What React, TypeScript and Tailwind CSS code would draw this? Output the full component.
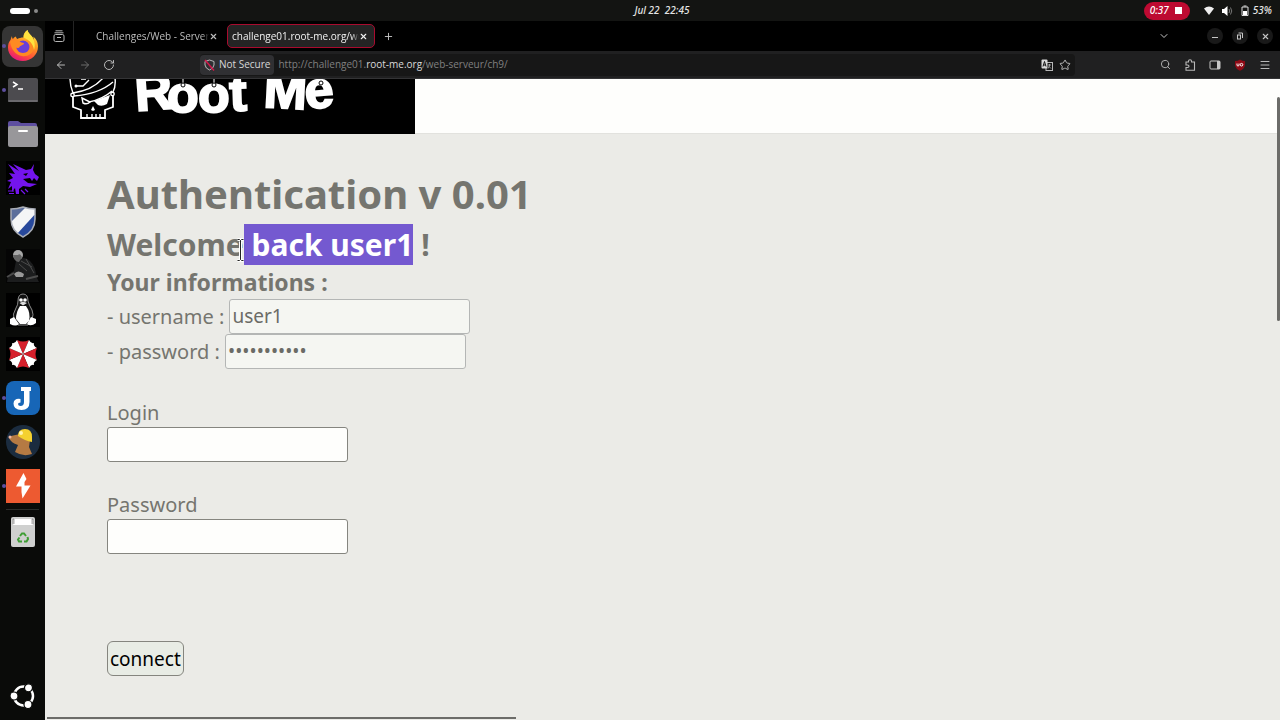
import type { ReactNode } from "react";
import { ArrowLeft, ArrowRight, ChevronDown, Menu, Plus, RotateCw, Search, Star, X } from "lucide-react";

const dockApps: { name: string; running?: boolean; active?: boolean; icon: ReactNode }[] = [
  { name: "Firefox", running: true, active: true, icon: <FirefoxIcon /> },
  { name: "Terminal", running: true, icon: <TerminalIcon /> },
  { name: "Files", icon: <FilesIcon /> },
  { name: "Dragon", icon: <DragonIcon /> },
  { name: "Shield", icon: <ShieldIcon /> },
  { name: "Hashcat", icon: <HoodedIcon /> },
  { name: "Linux", icon: <TuxIcon /> },
  { name: "Umbrella", icon: <UmbrellaIcon /> },
  { name: "Joplin", running: true, icon: <JoplinIcon /> },
  { name: "Mole", icon: <MoleIcon /> },
  { name: "Burp Suite", running: true, icon: <BurpIcon /> },
];

function FirefoxIcon() {
  return (
    <svg viewBox="0 0 32 32" className="w-8 h-8">
      <defs>
        <linearGradient id="fx" x1="0.8" y1="0" x2="0.3" y2="1">
          <stop offset="0" stopColor="#fff04a" />
          <stop offset="0.4" stopColor="#ff9a1f" />
          <stop offset="0.75" stopColor="#ff4a3c" />
          <stop offset="1" stopColor="#e3167f" />
        </linearGradient>
      </defs>
      <path d="M5 6C4 8 3.500 10 3.500 10C1.500 12 1 15 1 17.500C1 25.500 7.500 31 15.800 31C24.500 31 31 24.500 31 16.500C31 11.500 28.500 8 26 6.500C26.800 8 27 9 27 10C25.500 5 21 4 20.500 0C17.500 1.500 16 5 16.500 7.500C14 7.500 12 8 10.500 9C9.500 8.500 9 7.500 9 6.500C7.500 7 6.500 8 6 9C5.200 8.500 5 7 5 6Z" fill="url(#fx)" />
      <circle cx="16" cy="17" r="6.500" fill="#6a3fd8" />
      <path d="M3 11C7 9 12 10 13.500 12C14.500 13 17 12.800 17 13.500C17 15 13 15.500 12.500 17C12 18.500 9.500 18 9 17.500C9.500 20 12 23 16 23C20 23 23 20 23 17C23 13 21 11.500 18 10C24 10 27 14 27 18C26 24 20 27 15 26C9 25 4 20 3 11Z" fill="#ff8a22" />
      <path d="M16.500 7.500C17 3.500 19 1.500 20.500 0C21 4 25.500 5 27 11C28 14 28 17 27 20C26 13 22 10 16.500 7.500Z" fill="#ffe33f" />
    </svg>
  );
}

function TerminalIcon() {
  return (
    <svg viewBox="0 0 30 24" className="w-[30px] h-6">
      <rect x="0" y="0" width="30" height="24" rx="2" fill="#4c4b4f" />
      <rect x="0" y="22" width="30" height="2" rx="1" fill="#6b6a6e" />
      <path d="M5 4L9 6.500L5 9M10 11H15" fill="none" stroke="#fff" strokeWidth="1.500" />
    </svg>
  );
}

function FilesIcon() {
  return (
    <svg viewBox="0 0 30 28" className="w-[30px] h-7">
      <path d="M0 3Q0 1 2 1H10L13 3H27Q29 3 29 5V14H0Z" fill="#5e4fa0" />
      <rect x="0" y="6" width="30" height="21" rx="2" fill="#98979a" />
      <rect x="10" y="10" width="10" height="2" rx="1" fill="#fff" />
    </svg>
  );
}

function DragonIcon() {
  return (
    <svg viewBox="0 0 34 34" className="w-[34px] h-[34px]">
      <rect width="34" height="34" fill="#000" />
      <path d="M2 3L13 10L7 3L20 9L25 8L28 3L27 9L29 13L33 16L31 20L28 17L26 20L24 17L17 18L22 22L31 23L24 26L17 25L13 28V33H10L9 27L6 31L6 25L2 28L5 21L1 20L7 17L3 12L9 13Z" fill="#7414ee" />
      <path d="M17 13L22 12L20 15Z" fill="#000" />
      <path d="M2 30H8M3 32.500H8M15 29L19 33M19 28L22 31" stroke="#7414ee" strokeWidth="1.200" />
    </svg>
  );
}

function ShieldIcon() {
  return (
    <svg viewBox="0 0 28 32" className="w-7 h-8">
      <clipPath id="shield"><path d="M2 3Q8 3 14 1Q20 3 26 3V13Q26 25 14 31Q2 25 2 13Z" /></clipPath>
      <g clipPath="url(#shield)">
        <rect width="28" height="32" fill="#27489b" />
        <path d="M0 0H20L2 18H0Z" fill="#5c6f9c" />
        <path d="M-2 20L20 -2L30 4L8 28Z" fill="#f4f5f6" />
      </g>
      <path d="M2 3Q8 3 14 1Q20 3 26 3V13Q26 25 14 31Q2 25 2 13Z" fill="none" stroke="#a9adb6" strokeWidth="1.500" />
    </svg>
  );
}

function HoodedIcon() {
  return (
    <svg viewBox="0 0 34 34" className="w-[34px] h-[34px]">
      <rect width="34" height="34" fill="#050505" />
      <path d="M1 33Q2 24 8 22L10 12Q18 6 24 12Q30 18 30 27L33 33Z" fill="#1c1d1e" />
      <ellipse cx="12" cy="6" rx="5" ry="5" fill="#a7a7a7" />
      <path d="M7 6Q8 13 13 13L16 8Q14 4 12 6Z" fill="#626262" />
      <path d="M15 12L26 18M20 10L28 24M13 15L21 22" stroke="#4b4b4b" strokeWidth="1" />
      <path d="M8 25Q12 20 18 25L17 28H10Z" fill="#999" />
      <path d="M1 28L8 24M20 30L32 27" stroke="#4c4c4c" strokeWidth="2" />
    </svg>
  );
}

function TuxIcon() {
  return (
    <svg viewBox="0 0 34 34" className="w-[34px] h-[34px]">
      <rect width="34" height="34" fill="#000" />
      <path d="M12 8Q12 1 17 1Q22 1 22 8Q23 12 26 17Q28 21 26 27L22 32H12L8 27Q6 21 10 15Q12 12 12 8Z" fill="#111" stroke="#aaa" strokeWidth="0.800" />
      <path d="M14 13L20 13Q25 20 23 28L20 31H14L10 26Q10 19 14 13Z" fill="#fff" />
      <circle cx="15" cy="7" r="1.800" fill="#fff" />
      <circle cx="19" cy="7" r="1.800" fill="#fff" />
      <path d="M13.500 10L17 8.500L21 10L17 12.500Z" fill="#ddd" />
      <path d="M4 26L8 24L13 31Q10 34 4 31ZM30 26L25 24L21 31Q25 34 30 30Z" fill="#fff" />
    </svg>
  );
}

function UmbrellaIcon() {
  return (
    <svg viewBox="0 0 34 34" className="w-[34px] h-[34px]">
      <rect width="34" height="34" fill="#000" />
      <g transform="translate(17 17)">
        {[0, 90, 180, 270].map((a) => (
          <g key={a} transform={`rotate(${a})`}>
            <path d="M0 0L-6 -14Q0 -11 6 -14Z" fill="#d61f2b" />
            <path d="M0 0L6 -14Q8 -10 11 -11Q10 -8 14 -6Z" fill="#fff" />
          </g>
        ))}
      </g>
    </svg>
  );
}

function JoplinIcon() {
  return (
    <svg viewBox="0 0 34 34" className="w-[34px] h-[34px]">
      <rect width="34" height="34" rx="8" fill="#1766b7" />
      <path d="M15 6H25V10H23.500V21Q23.500 29 15.500 29Q7.500 29 7.500 22.500Q8 17 14.500 18V21.500Q12 21.500 12 23Q12 25 14.500 25Q18 25 18 21V10H15Z" fill="#fff" />
    </svg>
  );
}

function MoleIcon() {
  return (
    <svg viewBox="0 0 34 34" className="w-[34px] h-[34px]">
      <circle cx="17" cy="17" r="17" fill="#1b2c3f" />
      <path d="M3 13Q2 11 5 11L14 9L24 15L23 22L26 29Q17 32 9 27L12 20Q5 18 3 13Z" fill="#b57a43" />
      <path d="M12 11Q12 4 19 4Q26 4 26 12V17Q19 16 12 11Z" fill="#f5d12f" />
      <circle cx="15" cy="8" r="2" fill="#fff4b0" />
      <circle cx="4" cy="12" r="1.500" fill="#f0b7a5" />
    </svg>
  );
}

function BurpIcon() {
  return (
    <svg viewBox="0 0 34 34" className="w-[34px] h-[34px]">
      <rect width="34" height="34" fill="#ed5a31" />
      <path d="M17.500 4L10 17.500H15.500V23L16.500 29.500L24.500 16.500H18.500V13L20.500 10Z" fill="#fff" />
    </svg>
  );
}

function TrashIcon() {
  return (
    <svg viewBox="0 0 24 30" className="w-6 h-[30px]">
      <rect x="0" y="0" width="24" height="30" rx="2" fill="#cfd0cf" />
      <rect x="2" y="2" width="20" height="6" rx="1" fill="#fff" />
      <path d="M2 7V2H3V7M21 7V2H22V7" stroke="#777" strokeWidth="0.600" fill="none" />
      <g fill="none" stroke="#3f9e35" strokeWidth="2">
        <path d="M9 19L11 16.500H13L15 19" />
        <path d="M16.500 20L17 22L15.500 24.500H13" />
        <path d="M11 24.500H8L7 22.500L8.500 20.500" />
      </g>
    </svg>
  );
}

function UbuntuIcon() {
  return (
    <svg viewBox="0 0 26 26" className="w-[26px] h-[26px]">
      <circle cx="13.500" cy="13" r="9.500" fill="none" stroke="#fff" strokeWidth="2.500" />
      <g fill="#fff" stroke="#0a0b09" strokeWidth="1.200">
        <circle cx="4" cy="13" r="4" />
        <circle cx="18.500" cy="4.800" r="4" />
        <circle cx="18" cy="21.500" r="4" />
      </g>
    </svg>
  );
}

function RootMeLogo() {
  return (
    <svg viewBox="0 0 370 55" className="w-[370px] h-[55px] bg-black" role="img" aria-label="Root Me">
      <g fill="none" stroke="#fff" strokeWidth="1.400">
        <path d="M25 -1Q25 7 28 14Q48 11 58 -1M29 17Q54 15 68 3" />
        <path d="M70 -1Q71 7 68 13M44 23Q58 20 67 12" />
        <path d="M32 7H38L44 1M36 0H41" />
        <path d="M28 18V28L36 31V39H60V31L68 28V17" strokeWidth="1.800" />
        <path d="M42 39V35M47 39V35M51 39V35M55 39V35" />
        <circle cx="27.500" cy="16" r="1.700" />
        <circle cx="67.500" cy="15" r="1.700" />
        <path d="M37 19L45 23Q42 26 38 24Z" />
      </g>
      <path d="M49 22L65 16L62 25Q57 28 53 26ZM46 31L48 27L50 31L48 32Z" fill="#fff" />
      <circle cx="31" cy="7" r="1.500" fill="#fff" />
      <text
        x="91 122 153 185 202 218 261"
        y="32 33 33 32 32 28 30"
        rotate="-4 0 0 -2 0 3 -5"
        fill="#fff"
        stroke="#fff"
        strokeWidth="2"
        className="font-['Liberation_Sans',sans-serif] font-bold text-[52px]"
      >
        Root Me
      </text>
      <path d="M138 0V5M169 0V5M276 0V4" stroke="#fff" />
      <g fill="#fff" stroke="#000" strokeWidth="1">
        <circle cx="138" cy="6" r="2" />
        <circle cx="169" cy="6" r="2" />
        <circle cx="276" cy="4" r="2" />
      </g>
    </svg>
  );
}

function TopBar() {
  return (
    <header className="h-[21px] grid grid-cols-3 items-center bg-[#131412] text-[#e4e4e4] text-[10px] font-medium italic px-2">
      <div className="flex items-center gap-1 pl-0.5">
        <span className="w-5 h-1.5 rounded-full bg-white" />
        <span className="w-1 h-1 rounded-full bg-[#8a8a8a]" />
      </div>
      <time className="text-center whitespace-pre pl-11">Jul 22  22:45</time>
      <div className="flex items-center justify-end">
        <button className="flex items-center gap-1.5 h-[18px] px-1.5 rounded-full bg-[#bd0a31] text-white italic mr-3.5">
          0:37
          <span className="w-[7px] h-[7px] mr-0.5 bg-white" />
        </button>
        <svg viewBox="0 0 10 9" className="w-[10px] h-[9px] mr-2">
          <path d="M0 2.500Q5 -1.500 10 2.500L5 9Z" fill="#eee" />
        </svg>
        <svg viewBox="0 0 11 10" className="w-[11px] h-[10px] mr-2">
          <path d="M0 3H2L5.500 0V10L2 7H0Z" fill="#fff" />
          <path d="M7 3Q8.500 5 7 7M8.500 1.500Q11 5 8.500 8.500" fill="none" stroke="#777" />
        </svg>
        <svg viewBox="0 0 8 11" className="w-2 h-[11px] mr-1">
          <path d="M2.500 1H5.500M1 2H7V10.500H1Z" fill="none" stroke="#ddd" />
          <rect x="2" y="6" width="4" height="4" fill="#fff" />
        </svg>
        <span>53%</span>
      </div>
    </header>
  );
}

function Dock() {
  return (
    <nav className="w-[45px] shrink-0 flex flex-col bg-[#0a0b09] pt-[3px] pb-0.5">
      {dockApps.map((app) => (
        <button key={app.name} aria-label={app.name} className="relative w-full h-11 flex items-center justify-center">
          {app.running && <span className="absolute left-[2px] w-1 h-1 rounded-full bg-[#5d4f9e]" />}
          <span className={app.active ? "w-[41px] h-[41px] flex items-center justify-center rounded-lg bg-[#353535]" : "flex"}>
            {app.icon}
          </span>
        </button>
      ))}
      <div className="h-px mx-1.5 mt-px bg-[#2c2d2c]" />
      <button aria-label="Trash" className="w-full h-11 flex items-center justify-center"><TrashIcon /></button>
      <button aria-label="Show apps" className="w-full h-11 mt-auto flex items-center justify-center"><UbuntuIcon /></button>
    </nav>
  );
}

function Tab({ title, active }: { title: string; active?: boolean }) {
  return (
    <div
      className={
        active
          ? "w-[148px] h-6 flex items-center pl-1 pr-1.5 rounded-[5px] border border-[#a90b2e] bg-[#242424] text-[#f2f2f2]"
          : "w-[148px] h-6 flex items-center pl-[19px] pr-[7px] text-[#bdbdbd]"
      }
    >
      <span className="flex-1 overflow-hidden whitespace-nowrap [mask-image:linear-gradient(to_right,black_94%,transparent)]">{title}</span>
      <button aria-label="Close tab"><X size={9} strokeWidth={3} /></button>
    </div>
  );
}

function TabStrip() {
  return (
    <div className="h-[30px] flex items-center bg-black font-['Open_Sans',sans-serif] text-[10px] text-[#c6c6c6]">
      <button aria-label="Firefox View" className="w-[29px] h-full flex items-center justify-center border-r border-[#242424]">
        <svg viewBox="0 0 12 12" className="w-3 h-3" fill="none" stroke="#b5b5b5">
          <path d="M2.500 0.800H9.500M1.500 2.800H10.500" />
          <rect x="1" y="4.500" width="10" height="7" rx="1.500" />
          <path d="M4 7.500H8" />
        </svg>
      </button>
      <div className="flex gap-0.5 ml-[3px]">
        <Tab title="Challenges/Web - Server :" />
        <Tab title="challenge01.root-me.org/we" active />
      </div>
      <button aria-label="New tab" className="ml-2"><Plus size={11} /></button>
      <div className="ml-auto flex items-center pr-[7px]">
        <button aria-label="List tabs" className="mr-[37px]"><ChevronDown size={12} /></button>
        <div className="flex gap-[9px]">
          <button aria-label="Minimize" className="w-4 h-4 rounded-full bg-[#191919] flex items-end justify-center">
            <span className="w-1.5 h-px bg-[#c6c6c6] mb-1.5" />
          </button>
          <button aria-label="Restore" className="w-4 h-4 rounded-full bg-[#191919] flex items-center justify-center">
            <svg viewBox="0 0 8 8" className="w-2 h-2" fill="none" stroke="#c6c6c6">
              <path d="M2.500 1H6.500V6" />
              <rect x="1.500" y="3" width="3" height="4" />
            </svg>
          </button>
          <button aria-label="Close" className="w-4 h-4 rounded-full bg-[#191919] flex items-center justify-center"><X size={9} strokeWidth={3} /></button>
        </div>
      </div>
    </div>
  );
}

function Toolbar() {
  return (
    <div className="h-7 flex items-center bg-[#202021] border-b border-[#343436] font-['Open_Sans',sans-serif] text-[10px] text-[#b8b8b8] pl-2.5 pr-[9px]">
      <div className="flex gap-3">
        <button aria-label="Back"><ArrowLeft size={12} /></button>
        <button aria-label="Forward" className="text-[#6c6c6c]"><ArrowRight size={12} /></button>
        <button aria-label="Reload"><RotateCw size={12} /></button>
      </div>
      <div className="flex-1 h-[22px] mx-[85px] flex items-center rounded bg-[#171717] pr-1">
        <button className="h-5 flex items-center gap-1 px-1 rounded bg-[#303033] text-[#d8d8d8] mr-1">
          <svg viewBox="0 0 11 12" className="w-[11px] h-3" fill="none">
            <path d="M5.500 1L10 2.500V6Q9.500 9.500 5.500 11Q1.500 9.500 1 6V2.500Z" stroke="#b8b8b8" />
            <path d="M1 1L10 11.500" stroke="#d3164a" strokeWidth="1.500" />
          </svg>
          <span>Not Secure</span>
        </button>
        <span className="flex-1 text-[#808080]">
          http://challenge01.<span className="text-[#dadada]">root-me.org</span>/web-serveur/ch9/
        </span>
        <button aria-label="Translate page" className="mr-1.5">
          <svg viewBox="0 0 12 12" className="w-3 h-3">
            <rect x="5" y="3.500" width="6.500" height="8" fill="none" stroke="#b8b8b8" />
            <path d="M7 6H10M8.500 5V7L7 9.500M8 7.500L10 9.500" stroke="#b8b8b8" strokeWidth="0.800" fill="none" />
            <rect x="0.500" y="0.500" width="6" height="9" rx="1" fill="#d8d8d8" />
            <path d="M2 7.500L3.500 2.500L5 7.500M2.500 6H4.500" stroke="#171717" fill="none" />
          </svg>
        </button>
        <button aria-label="Bookmark"><Star size={12} /></button>
      </div>
      <div className="flex items-center gap-[13px]">
        <button aria-label="Search"><Search size={11} /></button>
        <button aria-label="Extensions">
          <svg viewBox="0 0 12 12" className="w-3 h-3" fill="none" stroke="#b8b8b8" strokeWidth="1.100">
            <path d="M4.500 3V2Q4.500 0.700 6 0.700Q7.500 0.700 7.500 2V3H10.500V11.300H2V8.500H3.500Q5 8.500 5 7.300Q5 6 3.500 6H2V3Z" />
          </svg>
        </button>
        <button aria-label="Sidebar">
          <svg viewBox="0 0 12 10" className="w-3 h-[10px]">
            <rect x="1" y="1" width="10" height="8" rx="1" fill="none" stroke="#c6c6c6" />
            <rect x="8" y="1" width="3" height="8" fill="#c6c6c6" />
          </svg>
        </button>
        <button aria-label="uBlock Origin">
          <svg viewBox="0 0 12 12" className="w-3 h-3">
            <path d="M6 0.500Q8 2 11 2V6Q10.500 10 6 11.700Q1.500 10 1 6V2Q4 2 6 0.500Z" fill="#8e0b16" />
            <path d="M3 4.500V6Q3 7 4 7Q5 7 5 6V4.500" fill="none" stroke="#fff" />
            <circle cx="7.500" cy="5.700" r="1.300" fill="none" stroke="#fff" />
          </svg>
        </button>
        <button aria-label="Menu"><Menu size={12} /></button>
      </div>
    </div>
  );
}

function LoginPage() {
  const field = "w-[241px] h-[35px] px-0.5 rounded-[3px] border text-[19px] align-top";
  return (
    <main className="flex-1 relative bg-[#ebebe7] text-[#75756f]">
      <div className="flex bg-[#fefefc] border-b border-[#e2e2de]">
        <a href="#" className="block -mb-px"><RootMeLogo /></a>
      </div>

      <form className="pl-[62px] pr-6 pt-8 pb-11 text-[20px] leading-7" onSubmit={(e) => e.preventDefault()}>
        <h1 className="text-[40px] leading-[56px] pb-0.5 font-bold">Authentication v 0.01</h1>
        <h2 className="text-[30px] leading-[41px] font-bold">
          Welcome
          <span className="relative inline-block whitespace-pre bg-[#7459d0] text-white">
            {" "}back user1
            <svg viewBox="0 0 9 24" className="absolute -left-2 top-[14px] w-[9px] h-6" fill="none">
              <path d="M1.500 1.500H3.500L4.500 2.500L5.500 1.500H7.500M4.500 2.500V21.500M1.500 22.500H3.500L4.500 21.500L5.500 22.500H7.500" stroke="#fff" strokeWidth="3" />
              <path d="M1.500 1.500H3.500L4.500 2.500L5.500 1.500H7.500M4.500 2.500V21.500M1.500 22.500H3.500L4.500 21.500L5.500 22.500H7.500" stroke="#222" />
            </svg>
          </span>{" "}
          !
        </h2>
        <h3 className="text-[23px] leading-[34px] font-bold">Your informations :</h3>
        <div className="leading-[35px]">
          <label htmlFor="info-username">- username : </label>
          <input id="info-username" type="text" disabled defaultValue="user1" className={`${field} border-[#b4b6b5] bg-[#f5f6f2] text-[#6b6b66]`} />
        </div>
        <div className="leading-[35px]">
          <label htmlFor="info-password">- password : </label>
          <input id="info-password" type="password" disabled defaultValue="abcdefghijk" className={`${field} border-[#b4b6b5] bg-[#f5f6f2] text-[#6b6b66]`} />
        </div>

        <div className="mt-[30px] flex flex-col items-start">
          <label htmlFor="login">Login</label>
          <input id="login" type="text" className={`${field} border-[#85857f] bg-[#fefefc]`} />
        </div>
        <div className="mt-[29px] flex flex-col items-start">
          <label htmlFor="password">Password</label>
          <input id="password" type="password" className={`${field} border-[#85857f] bg-[#fefefc]`} />
        </div>
        <button type="submit" className="mt-[87px] h-[35px] px-0.5 rounded-md border border-[#85857f] bg-[#e8ece5] text-[19px] text-black">connect</button>
      </form>

      <div className="absolute right-0 top-[18px] w-[3px] h-[35%] rounded bg-[#6c6c69]" />
      <div className="absolute left-0.5 bottom-px w-[38%] h-0.5 bg-[#6c6c69]" />
    </main>
  );
}

export default function App() {
  return (
    <div className="min-h-screen flex flex-col font-['Noto_Sans',sans-serif]">
      <TopBar />
      <div className="flex-1 flex">
        <Dock />
        <div className="flex-1 min-w-0 flex flex-col">
          <TabStrip />
          <Toolbar />
          <LoginPage />
        </div>
      </div>
    </div>
  );
}
